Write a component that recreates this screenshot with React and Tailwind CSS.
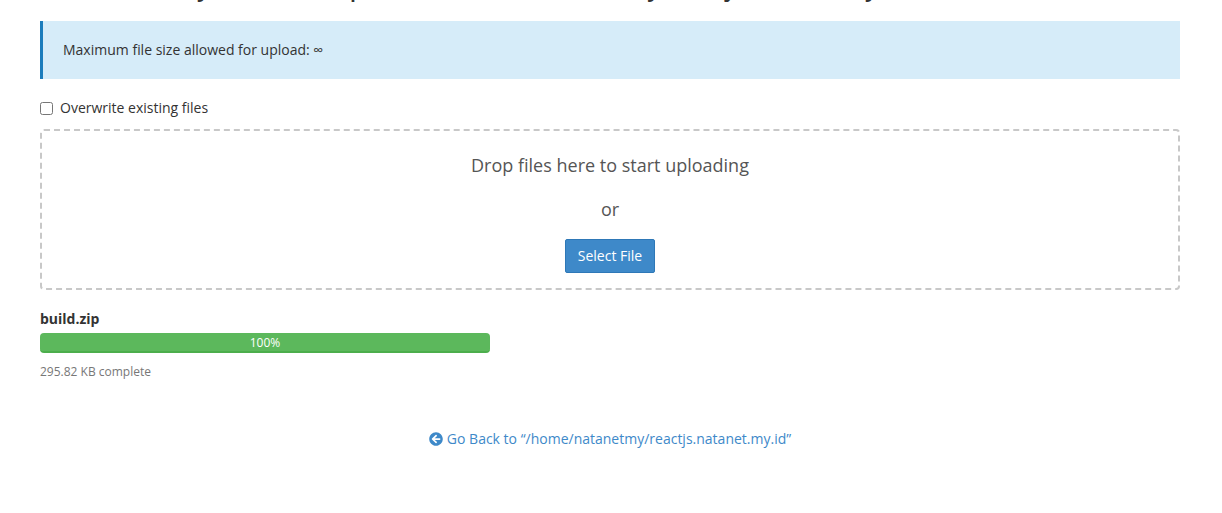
import { FaArrowCircleLeft } from "react-icons/fa";

export default function App() {
  return (
    <div className="h-[513px] overflow-hidden bg-white pl-10 pr-[42px] font-['Open_Sans',sans-serif] text-sm text-[#333]">
      <h1 className="mt-[-28px] mb-[18px] ml-[2px] h-[31px] whitespace-nowrap text-[23px] leading-[31px] font-semibold text-[#333]">
        Select the file you want to upload to “/home/natanetmy/reactjs.natanet.my.id”.
      </h1>

      <div className="flex h-[58px] items-center border-l-[3px] border-[#1b7cbc] bg-[#d6ecf9] pl-5">
        Maximum file size allowed for upload: ∞
      </div>

      <label className="mt-[19px] flex h-5 items-center">
        <input type="checkbox" className="m-0 mr-[7px] size-[13px]" />
        Overwrite existing files
      </label>

      <div className="mt-[11px] flex h-[161px] flex-col items-center rounded border-2 border-dashed border-[#c8c8c8] pt-[22px] text-[#555]">
        <div className="text-lg leading-6">Drop files here to start uploading</div>
        <div className="mt-5 text-lg leading-6">or</div>
        <button className="mt-[18px] h-[34px] w-[90px] rounded-[2px] border border-[#2e78b7] bg-[#3e89c9] text-sm text-white">
          Select File
        </button>
      </div>

      <div className="mt-[19px] leading-5 font-bold">build.zip</div>
      <div className="mt-1 h-5 w-[450px] rounded-[4px] border-b-2 border-[#4cae4c] bg-[#5cb85c] text-center text-xs leading-5 text-white">
        100%
      </div>
      <div className="mt-[9px] text-xs leading-5 text-[#777]">295.82 KB complete</div>

      <div className="mt-[47px] flex items-center justify-center leading-5 text-[#3e89c9]">
        <FaArrowCircleLeft size={14} className="mr-1" />
        Go Back to “/home/natanetmy/reactjs.natanet.my.id”
      </div>
    </div>
  );
}
